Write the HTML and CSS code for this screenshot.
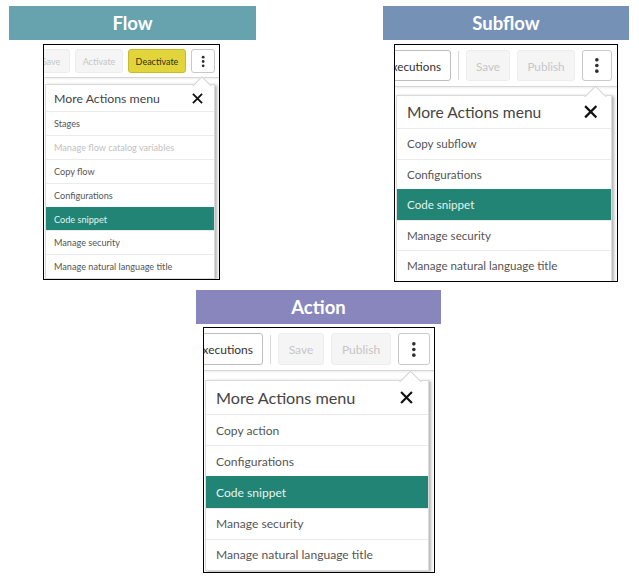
FILE: index.html
```html
<!DOCTYPE html>
<html lang="en">
<head>
<meta charset="utf-8">
<title>More Actions menu</title>
<link rel="stylesheet" href="styles.css">
</head>
<body>
<div class="page">
  <div class="top-row">
    <section class="group group-flow">
      <div class="tag tag-flow">Flow</div>
      <div class="box box-flow">
        <div class="toolbar">
          <button class="btn btn-off w-save">Save</button>
          <button class="btn btn-off w-activate">Activate</button>
          <button class="btn btn-warn w-deact">Deactivate</button>
          <button class="btn btn-kebab w-kebab"><svg class="dots" viewBox="0 0 10 30"><circle cx="5" cy="5" r="3.2"/><circle cx="5" cy="15" r="3.2"/><circle cx="5" cy="25" r="3.2"/></svg></button>
        </div>
        <div class="stage">
          <div class="popover">
            <span class="arrow"></span>
            <div class="pop-title"><span>More Actions menu</span><svg class="close" viewBox="0 0 12 12"><path d="M1 1L11 11M11 1L1 11"/></svg></div>
            <ul class="menu">
              <li>Stages</li>
              <li class="off">Manage flow catalog variables</li>
              <li>Copy flow</li>
              <li>Configurations</li>
              <li class="hl">Code snippet</li>
              <li>Manage security</li>
              <li>Manage natural language title</li>
            </ul>
          </div>
        </div>
      </div>
    </section>

    <section class="group group-sub">
      <div class="tag tag-sub">Subflow</div>
      <div class="box box-sub">
        <div class="toolbar">
          <button class="btn btn-line">Executions</button>
          <span class="divider"></span>
          <button class="btn btn-off w-save">Save</button>
          <button class="btn btn-off w-publish">Publish</button>
          <button class="btn btn-kebab w-kebab"><svg class="dots" viewBox="0 0 10 30"><circle cx="5" cy="5" r="3.2"/><circle cx="5" cy="15" r="3.2"/><circle cx="5" cy="25" r="3.2"/></svg></button>
        </div>
        <div class="stage">
          <div class="popover">
            <span class="arrow"></span>
            <div class="pop-title"><span>More Actions menu</span><svg class="close" viewBox="0 0 12 12"><path d="M1 1L11 11M11 1L1 11"/></svg></div>
            <ul class="menu">
              <li>Copy subflow</li>
              <li>Configurations</li>
              <li class="hl">Code snippet</li>
              <li>Manage security</li>
              <li>Manage natural language title</li>
            </ul>
          </div>
        </div>
      </div>
    </section>
  </div>

  <div class="bottom-row">
    <section class="group group-act">
      <div class="tag tag-act">Action</div>
      <div class="box box-act">
        <div class="toolbar">
          <button class="btn btn-line">Executions</button>
          <span class="divider"></span>
          <button class="btn btn-off w-save">Save</button>
          <button class="btn btn-off w-publish">Publish</button>
          <button class="btn btn-kebab w-kebab"><svg class="dots" viewBox="0 0 10 30"><circle cx="5" cy="5" r="3.2"/><circle cx="5" cy="15" r="3.2"/><circle cx="5" cy="25" r="3.2"/></svg></button>
        </div>
        <div class="stage">
          <div class="popover">
            <span class="arrow"></span>
            <div class="pop-title"><span>More Actions menu</span><svg class="close" viewBox="0 0 12 12"><path d="M1 1L11 11M11 1L1 11"/></svg></div>
            <ul class="menu">
              <li>Copy action</li>
              <li>Configurations</li>
              <li class="hl">Code snippet</li>
              <li>Manage security</li>
              <li>Manage natural language title</li>
            </ul>
          </div>
        </div>
      </div>
    </section>
  </div>
</div>
</body>
</html>
```

FILE: styles.css
```css
html, body {
  margin: 0;
  padding: 0;
  background: #ffffff;
}

.page {
  width: 639px;
  height: 582px;
  overflow: hidden;
  font-family: Lato, "Liberation Sans", sans-serif;
}

.top-row {
  display: flex;
  align-items: flex-start;
  padding-top: 6px;
}

.bottom-row {
  display: flex;
  margin-top: 8px;
}

.group {
  display: flex;
  flex-direction: column;
  align-items: flex-start;
}

.group-flow { margin-left: 9px; }
.group-sub { margin-left: 127px; }
.group-act { margin-left: 196px; }

.tag {
  height: 34px;
  display: flex;
  align-items: center;
  justify-content: center;
  color: #ffffff;
  font-weight: 700;
  font-size: 18.5px;
}

.tag-flow { width: 247px; background: #67a2af; }
.tag-sub { width: 246px; background: #7591b6; }
.tag-act { width: 245px; background: #8886bc; }

/* per-panel metrics */
.box-flow {
  margin-left: 34px;
  margin-top: 4px;
  width: 177px;
  height: 236px;
  --pad: 4px;
  --tr: 4px;
  --bh: 24px;
  --gap: 5px;
  --bfs: 9px;
  --fs: 9.15px;
  --tfs: 12.3px;
  --sg: 6px;
  --popr: 4px;
  --tp: 8px;
  --xr: 11px;
  --xs: 11px;
  --th: 26px;
  --rh: 23.9px;
  --aw: 20px;
  --ah: 10px;
  --as: 14px;
  --ar: 2.5px;
  --dh: 13px;
}

.box-sub {
  margin-left: 11px;
  margin-top: 4px;
  width: 224px;
  height: 238px;
  --pad: 5px;
  --tr: 5px;
  --bh: 31px;
  --gap: 7px;
  --bfs: 11.7px;
  --fs: 11.6px;
  --tfs: 15.6px;
  --sg: 8px;
  --popr: 5px;
  --tp: 10px;
  --xr: 14px;
  --xs: 13.5px;
  --th: 32px;
  --rh: 30.5px;
  --aw: 24px;
  --ah: 12px;
  --as: 17px;
  --ar: 4px;
  --dh: 17px;
}

.box-act {
  margin-left: 7px;
  margin-top: 3px;
  width: 232px;
  height: 246px;
  --pad: 5px;
  --tr: 4px;
  --bh: 32px;
  --gap: 7px;
  --bfs: 12px;
  --fs: 12.1px;
  --tfs: 16.2px;
  --sg: 9px;
  --popr: 5px;
  --tp: 10px;
  --xr: 15px;
  --xs: 13px;
  --th: 33px;
  --rh: 31.2px;
  --aw: 24px;
  --ah: 12px;
  --as: 17px;
  --ar: 6px;
  --dh: 17px;
}

.box {
  box-sizing: border-box;
  border: 1px solid #000000;
  background: #ffffff;
  overflow: hidden;
  display: flex;
  flex-direction: column;
  font-size: var(--fs);
}

.toolbar {
  flex-shrink: 0;
  display: flex;
  justify-content: flex-end;
  align-items: center;
  gap: var(--gap);
  padding: var(--pad) var(--tr) var(--pad) 0;
  border-bottom: 1px solid #d6d6d6;
  box-shadow: 0 1px 2px rgba(0, 0, 0, 0.08);
  overflow: hidden;
}

.btn {
  box-sizing: border-box;
  flex-shrink: 0;
  height: var(--bh);
  margin: 0;
  padding: 0;
  display: flex;
  align-items: center;
  justify-content: center;
  border: 1px solid #cccccc;
  border-radius: 3px;
  background: #ffffff;
  font-family: inherit;
  font-size: var(--bfs);
  white-space: nowrap;
}

.btn-off {
  background: #f5f5f5;
  border-color: #ededed;
  color: #c6c6c6;
}

.btn-warn {
  background: #e2d43b;
  border-color: #c9ba2c;
  color: #33300f;
}

.btn-line {
  padding: 0 9px;
  border-color: #bdbdbd;
  color: #333333;
}

.btn-kebab {
  border-color: #c9c9c9;
}

.dots {
  height: var(--dh);
  width: calc(var(--dh) / 3);
  fill: #2e2e2e;
}

.divider {
  flex-shrink: 0;
  width: 1px;
  height: 29px;
  background: #d8d8d8;
}

.box-flow .w-save { width: 38px; }
.box-flow .w-activate { width: 48px; }
.box-flow .w-deact { width: 58px; }
.box-flow .w-kebab { width: 24px; }

.box-sub .w-save { width: 44px; }
.box-sub .w-publish { width: 58px; }
.box-sub .w-kebab { width: 30px; }

.box-act .w-save { width: 46px; }
.box-act .w-publish { width: 60px; }
.box-act .w-kebab { width: 32px; }

.stage {
  flex: 1;
  min-height: 0;
  padding-top: var(--sg);
}

.popover {
  position: relative;
  margin: 0 var(--popr) 0 1px;
  background: #ffffff;
  border: 1px solid #dadada;
  box-shadow: 2px 1px 3px rgba(0, 0, 0, 0.3);
}

.arrow {
  position: absolute;
  bottom: calc(100% - 1px);
  right: var(--ar);
  width: var(--aw);
  height: var(--ah);
  overflow: hidden;
}

.arrow::before {
  content: "";
  position: absolute;
  box-sizing: border-box;
  width: var(--as);
  height: var(--as);
  left: calc((var(--aw) - var(--as)) / 2);
  top: calc(var(--ah) - var(--as) / 2);
  background: #ffffff;
  border: 1px solid #d4d4d4;
  transform: rotate(45deg);
}

.pop-title {
  box-sizing: border-box;
  height: var(--th);
  display: flex;
  align-items: center;
  justify-content: space-between;
  padding: 0 var(--xr) 0 var(--tp);
  font-size: var(--tfs);
  color: #444444;
  white-space: nowrap;
}

.close {
  width: var(--xs);
  height: var(--xs);
  fill: none;
  stroke: #111111;
  stroke-width: 2;
}

.menu {
  list-style: none;
  margin: 0;
  padding: 0;
}

.menu li {
  box-sizing: border-box;
  height: var(--rh);
  display: flex;
  align-items: center;
  padding-left: var(--tp);
  border-top: 1px solid #ebebeb;
  color: #555555;
  white-space: nowrap;
}

.menu li.off {
  color: #c2c2c2;
}

.menu li.hl {
  background: #218474;
  border-top-color: #218474;
  color: #e6f2ef;
}
```
